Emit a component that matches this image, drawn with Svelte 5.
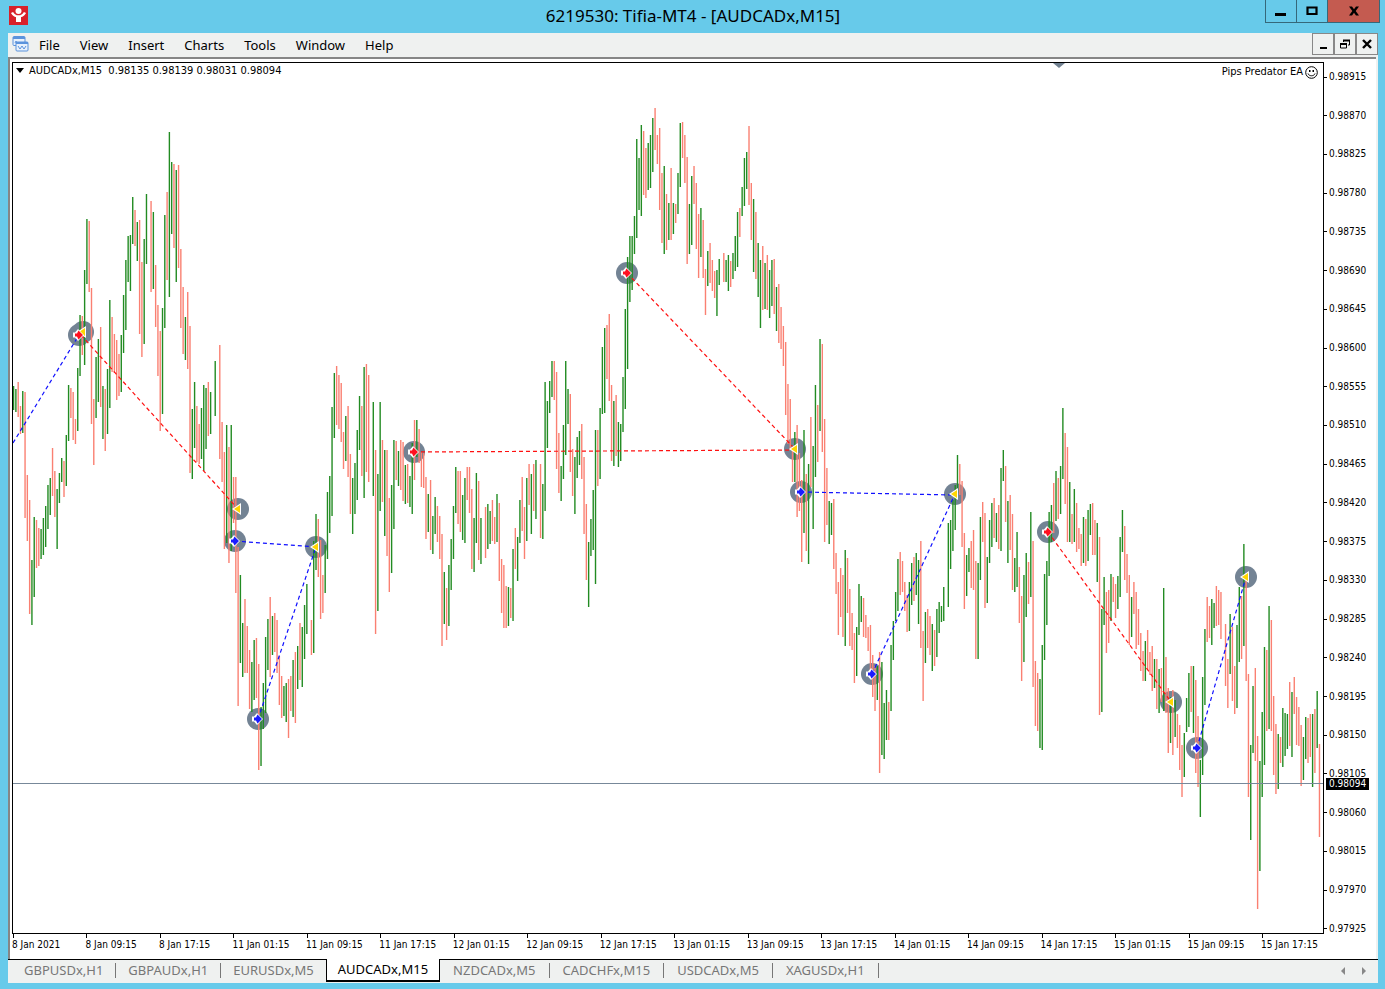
<script lang="ts">
  type Bar = { x: number; high: number; low: number; up: boolean };

  const menus = ["File", "View", "Insert", "Charts", "Tools", "Window", "Help"];

  const tabs = [
    "GBPUSDx,H1",
    "GBPAUDx,H1",
    "EURUSDx,M5",
    "AUDCADx,M15",
    "NZDCADx,M5",
    "CADCHFx,M15",
    "USDCADx,M5",
    "XAGUSDx,H1",
  ];
  let activeTab = $state("AUDCADx,M15");

  const prices = Array.from({ length: 23 }, (_, i) => (0.98915 - i * 0.00045).toFixed(5));

  const times = [
    "8 Jan 2021", "8 Jan 09:15", "8 Jan 17:15",
    "11 Jan 01:15", "11 Jan 09:15", "11 Jan 17:15",
    "12 Jan 01:15", "12 Jan 09:15", "12 Jan 17:15",
    "13 Jan 01:15", "13 Jan 09:15", "13 Jan 17:15",
    "14 Jan 01:15", "14 Jan 09:15", "14 Jan 17:15",
    "15 Jan 01:15", "15 Jan 09:15", "15 Jan 17:15",
  ];

  // one entry per M15 bar: g = up, r = down, then high-low; "." is a bar with no range
  const history = `
    g386-410 g389-412 r382-417 r406-434 g391-433 r392-518 r475-541 r500-614 g560-625 g517-597
    r520-568 r528-566 g529-559 g518-555 g506-547 g485-529 g478-515 r448-496 r471-517 g489-549
    g473-503 g458-482 r461-497 g435-486 g385-441 r388-418 r392-440 r419-444 g368-431 g315-376
    r316-355 g270-365 g219-284 r221-292 r288-424 r399-465 g357-418 g339-402 r327-407 g386-439
    r389-451 g369-434 g300-408 r317-372 r334-373 r340-400 r354-396 g335-392 g295-353 g260-330
    g236-282 g235-291 g197-244 r210-246 g222-261 r220-334 r262-357 g239-344 g194-264 .
    r201-292 g212-289 r265-327 r305-376 r331-431 g308-414 g215-328 r192-280 g132-297 g162-234
    r164-248 g170-282 r165-268 r249-328 r287-354 g317-360 r292-369 r326-473 g409-479 g382-448
    r406-462 r424-464 g408-459 g385-471 g388-449 r382-436 g392-434 . g361-416 .
    r345-459 r422-482 r452-549 g425-543 r447-563 g425-551 r477-523 r477-593 r547-706 g575-663
    g623-677 r599-673 r626-673 r650-709 g662-712 g640-700 r638-698 r664-770 g707-766 g683-729
    g637-713 g619-670 r597-677 g616-655 r613-652 r620-673 r656-705 r676-718 g686-716 g683-722
    r679-738 r676-711 g660-717 r652-723 g646-689 r623-680 g627-687 g605-659 g584-634 .
    r620-655 g541-653 g514-570 r519-577 r540-619 r575-613 g545-593 g492-559 g476-533 g407-516
    g373-438 r366-425 r375-429 r383-442 r432-469 g416-461 r406-477 r454-514 g478-534 g463-514
    g430-500 g396-450 r406-476 g367-498 r364-472 r375-482 . g402-496 r450-634 g474-611
    g402-511 r440-502 g450-536 r450-556 r498-592 g485-573 g440-529 r441-480 g451-486 r440-490
    r442-501 g465-504 r464-503 g476-507 g443-514 r420-480 g420-457 r429-463 r452-487 r453-488
    r477-539 g494-532 r480-550 g516-554 g497-534 r506-542 r516-559 r534-646 g572-624 r588-640
    g565-626 g539-590 g506-559 g467-513 r471-524 r471-532 g495-540 g478-543 r467-500 r467-513
    r489-569 g518-572 g473-543 r481-560 g518-564 . r507-558 g504-549 g511-544 r500-541
    r517-544 g494-542 r503-581 r559-613 r565-628 r586-628 g587-626 r588-618 g549-621 r528-569
    g537-581 g500-543 r477-531 r507-559 g478-541 r464-505 g474-534 r464-511 g460-519 .
    r464-538 g484-539 g382-511 g401-448 g381-413 g361-397 r361-400 r372-469 r433-493 g466-501
    g425-479 g361-455 g389-424 r394-472 r449-496 g457-514 g437-478 g431-465 r424-479 r457-534
    r504-580 g542-607 g519-556 g490-550 g430-584 r430-486 g408-479 g347-414 g328-413 r325-379
    r314-401 r385-461 g401-466 r395-456 g422-467 g424-461 g377-432 g309-409 g257-369 g236-302
    g236-290 g216-254 g139-238 g158-210 g125-216 r131-195 r148-198 g143-190 g135-188 g118-172
    r108-150 r135-164 r128-210 r173-243 g166-254 r194-250 g203-240 r168-240 g203-234 r204-223
    g173-214 g123-187 r122-158 r135-183 r157-264 g204-254 g176-245 r166-204 r183-249 r214-278
    g208-257 r220-278 r269-315 g251-286 r243-283 r260-291 r271-298 g270-316 g259-285 .
    r253-282 g260-282 g255-291 r261-287 g253-279 g236-271 g212-267 r208-237 g187-216 g158-206
    g152-189 r126-205 r183-240 g199-272 r212-279 g243-297 g260-328 r246-310 g263-309 r255-310
    g270-318 g260-306 r259-314 g287-331 r284-343 r307-349 r326-366 r342-415 r384-444 r399-450
    r447-482 g432-482 r425-517 r453-511 r480-562 g430-533 r474-551 g464-564 r417-487 g446-529
    g385-477 r405-462 g339-431 r344-452 r419-542 r468-525 g501-544 g503-535 r499-569 r553-594
    r582-635 r568-617 r575-637 g550-646 r558-613 r589-646 r613-650 r633-683 g627-676 g584-635
    g596-622 r598-637 r615-638 r627-651 r625-675 r655-697 r666-711 g666-700 r652-773 g662-755
    g703-759 g690-740 r702-740 g645-711 g621-660 g592-621 g559-611 r552-595 r561-592 r582-611
    r595-632 g582-631 g563-605 r557-601 g553-595 g560-624 r541-648 r631-701 g612-663 r609-648
    r616-655 g624-671 r630-666 g609-657 g602-633 g606-622 g587-621 . g523-607 g520-569
    g500-551 g485-530 g455-493 r464-495 r481-547 r533-609 g555-596 g548-572 r541-588 r530-590
    r561-659 g563-659 g517-580 r502-542 r513-608 g557-603 g520-563 g503-547 r498-538 g513-542
    r505-549 g468-551 g450-481 r466-522 g501-563 r495-550 r514-590 g558-592 g532-587 r567-623
    r596-681 g575-662 g553-617 r562-604 g512-597 r541-687 r661-726 r673-731 g679-748 g645-750
    g574-660 g561-625 g512-576 g505-542 r483-533 g471-521 r478-519 g466-514 g408-479 r433-504
    r447-542 g482-542 r514-544 g489-542 r503-552 r528-549 r534-566 g517-563 r519-566 g510-561
    g504-535 r503-555 r520-555 g523-582 r537-715 g609-712 g577-625 r592-653 r590-643 g574-621
    r577-602 r584-618 g576-609 g537-597 g510-552 r526-580 r554-593 r575-645 g597-637 r582-614
    r592-649 r609-645 r633-671 r651-681 g641-681 r630-670 r652-675 r646-691 g659-688 r659-709
    g669-713 r668-702 g588-711 r657-713 r688-753 g697-743 r690-755 g700-737 r714-748 r725-770
    r745-797 g733-777 g698-732 g673-727 r666-712 g666-733 r680-773 r716-787 g760-817 g677-775
    g629-705 r597-642 r606-638 g599-645 g603-628 r586-626 r590-625 r592-639 . r624-686
    r659-708 g614-674 r627-701 r666-714 g625-708 g587-662 r596-659 g544-646 r580-681 r674-797
    g745-840 g686-753 r668-761 r736-909 g761-871 g712-797 g647-765 r650-731 g606-729 r620-731
    r696-775 r724-794 g734-789 r737-763 g708-767 g713-756 g714-749 r682-746 g692-757 r677-714
    r697-745 r707-746 r725-786 g737-780 g717-759 r718-763 r714-757 g714-787 r709-773 g691-748
    r744-837
  `;

  const barStep = 2.291;
  const bars: Bar[] = history
    .trim()
    .split(/\s+/)
    .map((entry, i) => {
      const [high, low] = entry.slice(1).split("-").map(Number);
      return { x: 13.6 + i * barStep, high, low, up: entry[0] === "g" };
    })
    .filter((bar) => bar.high > 0);

  const trades = [
    { side: "buy", from: [13, 443], to: [79, 335] },
    { side: "sell", from: [81, 335], to: [238, 509] },
    { side: "buy", from: [235, 541], to: [316, 547] },
    { side: "buy", from: [258, 719], to: [316, 547] },
    { side: "sell", from: [414, 452], to: [795, 450] },
    { side: "sell", from: [627, 273], to: [795, 449] },
    { side: "buy", from: [801, 492], to: [955, 495] },
    { side: "buy", from: [872, 674], to: [955, 494] },
    { side: "sell", from: [1048, 532], to: [1171, 702] },
    { side: "buy", from: [1197, 748], to: [1246, 577] },
  ];

  const markers = [
    { kind: "close", x: 83, y: 332 },
    { kind: "sell", x: 79, y: 335 },
    { kind: "close", x: 238, y: 509 },
    { kind: "buy", x: 235, y: 541 },
    { kind: "buy", x: 258, y: 719 },
    { kind: "close", x: 316, y: 547 },
    { kind: "sell", x: 414, y: 452 },
    { kind: "sell", x: 627, y: 273 },
    { kind: "close", x: 795, y: 449 },
    { kind: "buy", x: 801, y: 492 },
    { kind: "buy", x: 872, y: 674 },
    { kind: "close", x: 955, y: 494 },
    { kind: "sell", x: 1048, y: 532 },
    { kind: "close", x: 1171, y: 702 },
    { kind: "buy", x: 1197, y: 748 },
    { kind: "close", x: 1246, y: 577 },
  ];
</script>

<div class="window">
  <header class="titlebar">
    <svg class="logo" viewBox="0 0 19 19" aria-hidden="true">
      <rect width="19" height="19" fill="#d8202a" />
      <circle cx="9.500" cy="5" r="3" fill="#fff" />
      <path d="M3 6.500C5 10 7 10.500 9.500 10.500S14 10 16 6.500" fill="none" stroke="#fff" stroke-width="2.500" />
      <path d="M7 10h5v6H7z" fill="#fff" />
    </svg>
    <h1>6219530: Tifia-MT4 - [AUDCADx,M15]</h1>
    <div class="controls">
      <button class="min" aria-label="Minimize">
        <svg viewBox="0 0 12 12"><path d="M0 8h11v3H0z" /></svg>
      </button>
      <button class="max" aria-label="Maximize">
        <svg viewBox="0 0 12 12"><path d="M1.500 2.500h9v6.500h-9z" fill="none" stroke="#000" stroke-width="2.200" /></svg>
      </button>
      <button class="close" aria-label="Close">
        <svg viewBox="0 0 12 12"><path d="M1 1.500h3l2 2.700 2-2.700h3L7.700 6 11 10.500H8L6 7.800 4 10.500H1L4.300 6z" /></svg>
      </button>
    </div>
  </header>

  <div class="client">
    <nav class="menubar">
      <svg class="doc" viewBox="0 0 17 17" aria-hidden="true">
        <g fill="#e8f1fc" stroke="#5b93dc">
          <rect x="1" y="1.500" width="12" height="9" rx="1" />
          <path d="M1 3h12" stroke-width="2" />
          <rect x="4" y="7" width="12" height="9" rx="1" />
          <path d="M4 8h12" stroke-width="2" />
        </g>
        <path d="M3 8l1-2 1 2M6 11l2 3 2-3 2 3 2-3" fill="none" stroke="#5b93dc" />
      </svg>
      {#each menus as menu}
        <button class="menu">{menu}</button>
      {/each}
      <div class="mdi">
        <button aria-label="Minimize chart">
          <svg viewBox="0 0 12 12"><path d="M3 9h7v2H3z" /></svg>
        </button>
        <button aria-label="Restore chart">
          <svg viewBox="0 0 12 12">
            <path d="M4.500 4V2.500h6v4.500H9M1.500 6h6v4h-6z" fill="none" stroke="#000" />
            <path d="M4 1.500h7v2H4zM1 5h7v2H1z" />
          </svg>
        </button>
        <button aria-label="Close chart">
          <svg viewBox="0 0 12 12"><path d="M2 2l8 8M10 2l-8 8" stroke="#000" stroke-width="2.400" /></svg>
        </button>
      </div>
    </nav>

    <main class="chart">
      <div class="plot">
        <svg class="bars" viewBox="13 63 1310 870" preserveAspectRatio="none" aria-label="AUDCADx M15 bar chart">
          <path d="M1053 63h12l-6 5z" fill="#708090" />
          {#each markers as marker}
            <circle cx={marker.x} cy={marker.y} r="11" fill="#738394" />
          {/each}
          {#each bars as bar}
            <path class={bar.up ? "up" : "down"} d="M{bar.x} {bar.high}V{bar.low}" />
          {/each}
          <path d="M13 783.500H1323" stroke="#778899" />
          {#each trades as trade}
            <path class="trade {trade.side}" d="M{trade.from[0]} {trade.from[1]}L{trade.to[0]} {trade.to[1]}" />
          {/each}
          {#each markers as marker}
            <g transform="translate({marker.x} {marker.y})">
              {#if marker.kind === "close"}
                <path d="M-6 0L3-6V6z" fill="#fff" />
                <path d="M-4 0L2-4V4z" fill="#ffd500" />
              {:else}
                <path d="M-6-2.500h2L-1-6 5 0-1 6-4 2.500h-2z" fill="#fff" />
                <path class="arrow {marker.kind}" d="M-4-1.500h2L-.5-4.500 4 0-.5 4.500-2 1.500h-2z" />
              {/if}
            </g>
          {/each}
        </svg>
        <div class="caption">
          <span class="quote"><i></i>AUDCADx,M15&nbsp; 0.98135 0.98139 0.98031 0.98094</span>
          <span class="expert">
            Pips Predator EA
            <svg viewBox="0 0 13 13" aria-hidden="true">
              <circle cx="6.500" cy="6.500" r="5.800" fill="none" stroke="#000" />
              <path d="M4 4h1.500v2H4zM7.500 4H9v2H7.500z" />
              <path d="M3 7.500c1 3 6 3 7 0" fill="none" stroke="#000" />
            </svg>
          </span>
        </div>
      </div>

      <div class="prices">
        {#each prices as price}
          <span>{price}</span>
        {/each}
        <strong>0.98094</strong>
      </div>

      <div class="times">
        {#each times as time}
          <span>{time}</span>
        {/each}
      </div>
    </main>

    <footer class="tabs">
      {#each tabs as tab}
        <button class:active={tab === activeTab} onclick={() => (activeTab = tab)}>{tab}</button>
      {/each}
      <div class="scroll">
        <button aria-label="Previous tabs"><svg viewBox="0 0 4 8"><path d="M4 0v8L0 4z" /></svg></button>
        <button aria-label="Next tabs"><svg viewBox="0 0 4 8"><path d="M0 0v8l4-4z" /></svg></button>
      </div>
    </footer>
  </div>
</div>

<style>
  :global(body) {
    margin: 0;
  }

  .window {
    box-sizing: border-box;
    min-height: 100vh;
    display: flex;
    flex-direction: column;
    padding: 0 7px 6px 8px;
    background: #67caea;
    color: #000;
    font-family: "Noto Sans", sans-serif;
  }

  button {
    margin: 0;
    padding: 0;
    border: 0;
    background: none;
    color: inherit;
    font: inherit;
  }

  .titlebar {
    display: grid;
    grid-template-columns: 1fr auto 1fr;
    height: 33px;
  }

  .logo {
    width: 19px;
    height: 19px;
    margin: 6px 0 0 1px;
  }

  h1 {
    margin: 0;
    font-size: 17px;
    font-weight: 400;
    line-height: 32px;
  }

  .controls {
    justify-self: end;
    display: flex;
    height: 23px;
    margin-right: -2px;
  }

  .controls button {
    box-sizing: border-box;
    width: 31px;
    border: 1px solid #35687a;
    border-width: 0 0 1px 1px;
  }

  .controls .close {
    width: 53px;
    border-right-width: 1px;
    background: #c45b50;
  }

  .controls svg {
    width: 12px;
    height: 12px;
    margin-top: 4px;
  }

  .client {
    flex: 1;
    display: flex;
    flex-direction: column;
    background: #eff1f0;
  }

  .menubar {
    display: flex;
    height: 24px;
    padding-left: 3px;
    font-size: 13px;
    line-height: 24px;
  }

  .doc {
    width: 17px;
    height: 17px;
    margin: 2px 0 0 1px;
  }

  .menu {
    margin: 0 10px;
  }

  .mdi {
    display: flex;
    height: 22px;
    margin-left: auto;
  }

  .mdi button {
    box-sizing: border-box;
    width: 22px;
    border: 1px solid #888;
    line-height: 0;
  }

  .mdi svg {
    width: 12px;
    height: 12px;
  }

  .chart {
    flex: 1;
    display: grid;
    grid-template-columns: 1fr 52px;
    grid-template-rows: 1fr 25px;
    margin-right: 2px;
    padding: 3px 0 0 2px;
    border-top: 2px solid #868686;
    border-left: 2px solid #868686;
    background: #fff;
    font-family: "DejaVu Sans Condensed", "DejaVu Sans", sans-serif;
    font-size: 10px;
    line-height: 12px;
  }

  .plot {
    position: relative;
    border: 1px solid #000;
  }

  .bars {
    position: absolute;
    width: 100%;
    height: 100%;
  }

  .up,
  .down {
    stroke: #228b22;
    stroke-width: 1.4;
  }

  .down {
    stroke: #fa8072;
  }

  .trade {
    stroke-dasharray: 4 3;
    stroke-width: 1.2;
  }

  .buy {
    stroke: #1010ff;
  }

  .sell {
    stroke: #ff1010;
  }

  .arrow {
    stroke: none;
  }

  .arrow.buy {
    fill: #1a1aff;
  }

  .arrow.sell {
    fill: #ff1020;
  }

  .caption {
    position: relative;
    display: flex;
    justify-content: space-between;
    padding: 2px 5px 0 3px;
    font-size: 11px;
  }

  .quote i {
    display: inline-block;
    margin-right: 5px;
    border: 4px solid transparent;
    border-top: 5px solid #000;
    border-bottom: 0;
    vertical-align: 1px;
  }

  .expert {
    display: flex;
    gap: 2px;
    margin-top: 1px;
  }

  .expert svg {
    width: 13px;
    height: 13px;
  }

  .prices {
    position: relative;
    display: flex;
    flex-direction: column;
    justify-content: space-between;
    margin-bottom: -1px;
    padding-top: 9px;
  }

  .prices span {
    display: flex;
    align-items: center;
    gap: 2px;
  }

  .prices span::before {
    content: "";
    width: 3px;
    height: 1px;
    background: #000;
  }

  .prices strong {
    position: absolute;
    top: 82%;
    left: 2px;
    padding: 0 3px;
    background: #000;
    color: #fff;
    font-weight: 400;
  }

  .times {
    display: grid;
    grid-template-columns: repeat(18, 5.6%);
    white-space: nowrap;
  }

  .times span::before {
    content: "";
    display: block;
    width: 1px;
    height: 4px;
    margin: 0 0 1px 1px;
    background: #000;
  }

  .tabs {
    display: flex;
    align-items: center;
    height: 21px;
    padding: 0 0 2px 4px;
    border-top: 1px solid #000;
    color: #777;
    font-size: 13px;
  }

  .tabs > button {
    padding: 0 12px;
    border-right: 1px solid #777;
    line-height: 15px;
  }

  .tabs > .active {
    align-self: start;
    margin: -1px 0 0 -1px;
    padding: 0 11px;
    border: 1px solid #000;
    border-width: 0 1px 2px;
    background: #fff;
    color: #000;
    line-height: 21px;
  }

  .tabs > .active ~ button {
    padding: 0 13px;
  }

  .scroll {
    display: flex;
    gap: 17px;
    margin: 0 12px 0 auto;
  }

  .scroll svg {
    display: block;
    width: 4px;
    height: 8px;
    fill: #888;
  }
</style>
